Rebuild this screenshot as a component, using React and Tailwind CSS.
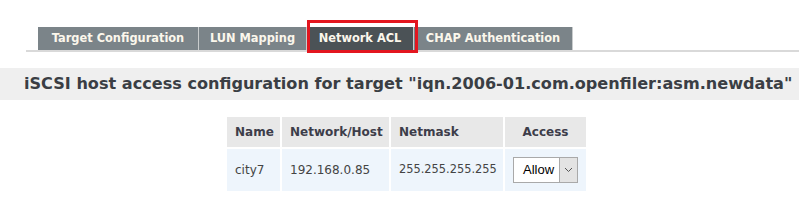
import React from "react";

const tabs = [
  { label: "Target Configuration", w: "w-[161px]", active: false },
  { label: "LUN Mapping", w: "w-[108px]", active: false },
  { label: "Network ACL", w: "w-[107px]", active: true },
  { label: "CHAP Authentication", w: "w-[159px]", active: false },
];

export default function App() {
  return (
    <div className="w-[799px] h-[201px] bg-white relative overflow-hidden" style={{ fontFamily: '"DejaVu Sans", Verdana, sans-serif' }}>
      <div className="pt-[27px] pl-[26px]">
        <div className="flex pl-[12px] border-b-2 border-[#d9d9d9]">
          {tabs.map((t, i) => (
            <div
              key={i}
              className={`${t.w} h-[23px] flex items-center justify-center text-[11.4px] font-bold text-[#fbf7ec] border-r border-[#c9cccd] ${t.active ? "bg-[#4b5256]" : "bg-[#7b8489]"}`}
            >
              {t.label}
            </div>
          ))}
        </div>
      </div>
      <div className="absolute left-[307px] top-[20px] w-[111px] h-[33px] border-[3px] border-[#e3161f]" />
      <div className="mt-[16px] h-[32px] bg-[#efefef] flex items-center pl-[24px] text-[16.1px] font-bold text-[#3a3e44] whitespace-nowrap">
        iSCSI host access configuration for target "iqn.2006-01.com.openfiler:asm.newdata"
      </div>
      <div className="mt-[17px] ml-[227px]">
        <table className="border-separate border-spacing-[2px] -m-[2px] text-[12px]">
          <thead>
            <tr className="h-[30px] bg-[#e8e8e8] text-[#3d3d4a] font-bold">
              <th className="w-[53px] text-left pl-[8px] font-bold">Name</th>
              <th className="w-[107px] text-left pl-[8px] font-bold">Network/Host</th>
              <th className="w-[112px] text-left pl-[8px] font-bold">Netmask</th>
              <th className="w-[81px] text-center font-bold">Access</th>
            </tr>
          </thead>
          <tbody>
            <tr className="h-[42px] bg-[#eef5fc] text-[#444]">
              <td className="pl-[8px]">city7</td>
              <td className="pl-[8px]">192.168.0.85</td>
              <td className="pl-[8px] text-[11.4px]">255.255.255.255</td>
              <td className="pl-[8px]">
                <div className="w-[65px] h-[26px] border border-[#a9a9a9] bg-white flex items-stretch" style={{ fontFamily: '"Liberation Sans", Arial, sans-serif' }}>
                  <div className="flex-1 flex items-center pl-[9px] text-[13px] text-black">Allow</div>
                  <div className="w-[18px] bg-[#e3e3e3] border-l border-[#a9a9a9] flex items-center justify-center">
                    <svg width="9" height="6" viewBox="0 0 9 6"><path d="M1 1 L4.5 4.5 L8 1" fill="none" stroke="#555" strokeWidth="1" /></svg>
                  </div>
                </div>
              </td>
            </tr>
          </tbody>
        </table>
      </div>
    </div>
  );
}
